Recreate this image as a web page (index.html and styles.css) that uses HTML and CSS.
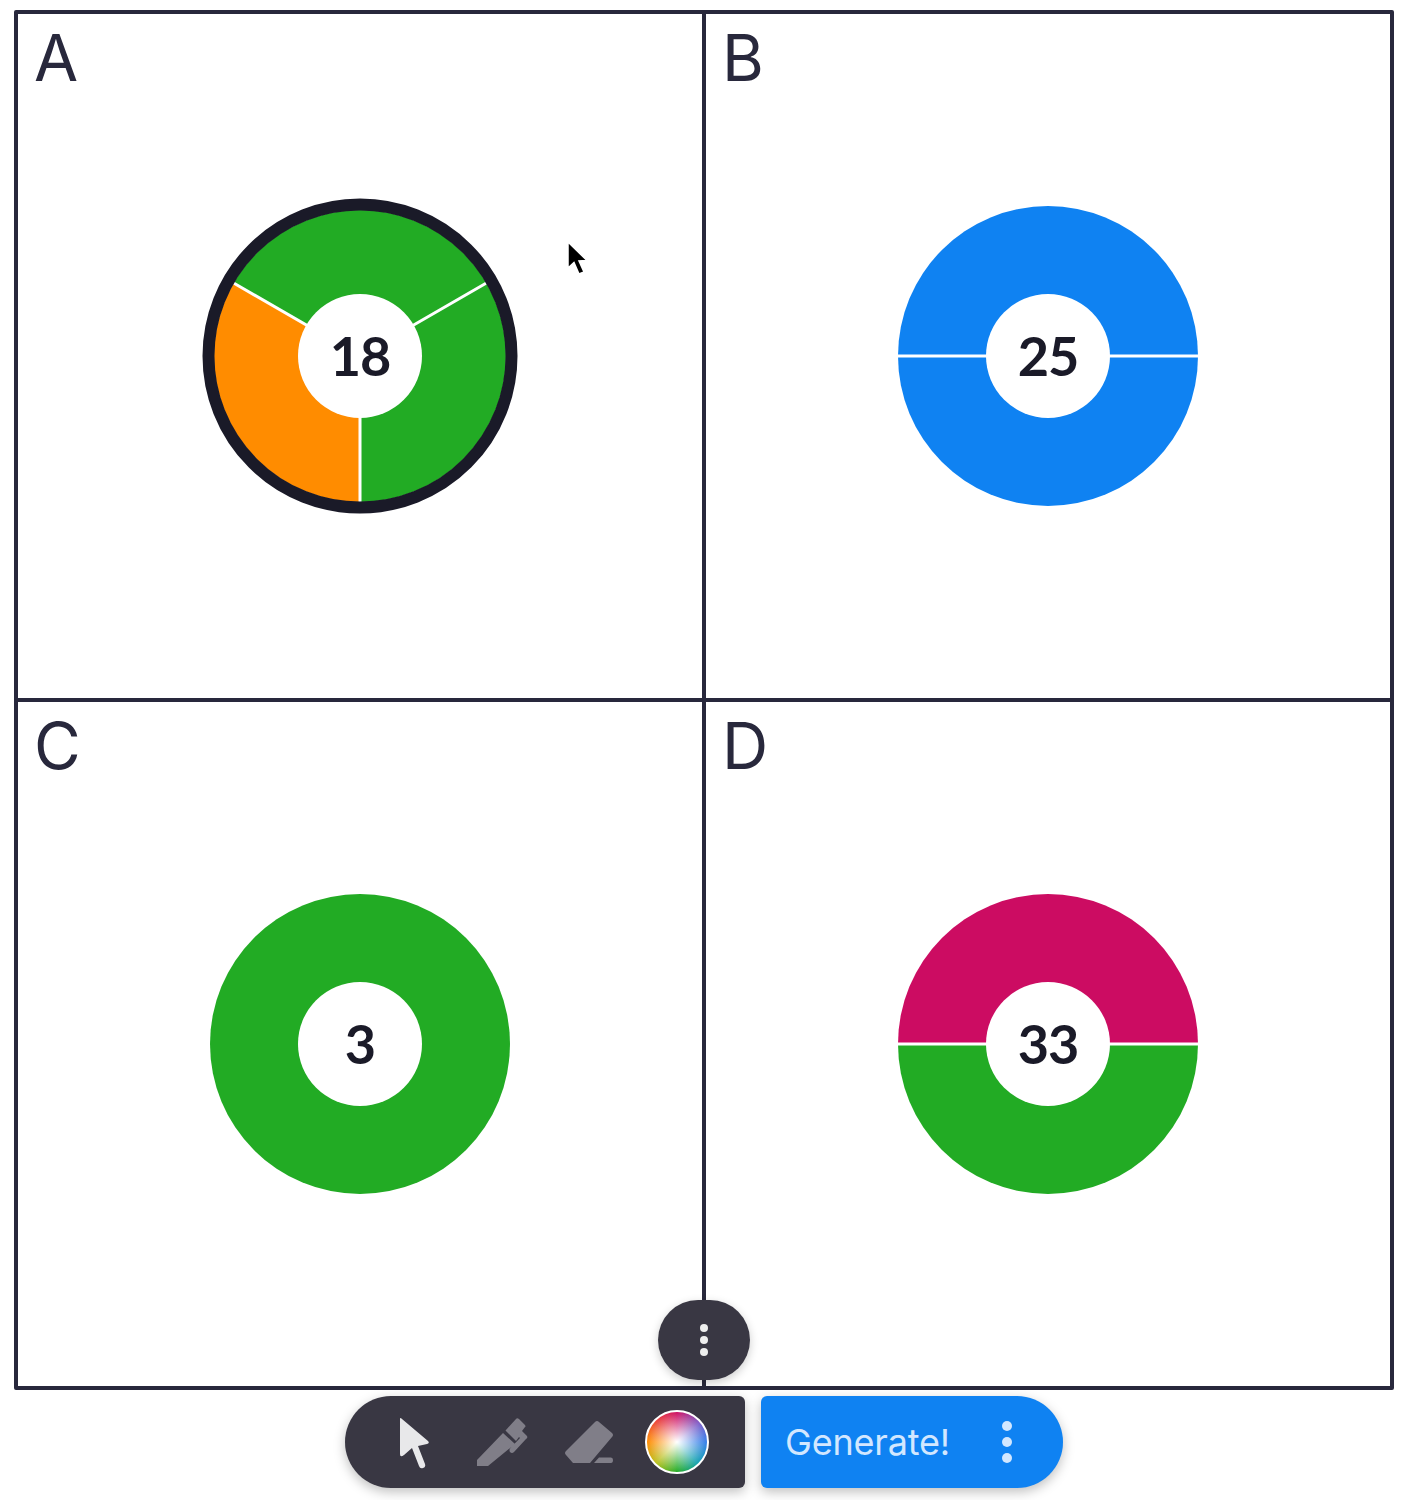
FILE: index.html
```html
<!DOCTYPE html>
<html lang="en">
<head>
    <meta charset="UTF-8">
    <meta name="viewport" content="width=device-width, initial-scale=1.0">
    <title>Wheels</title>
    <link rel="stylesheet" href="styles.css">
</head>
<body>
    <div class="board">
        <div class="cell">
            <span class="cell-label">A</span>
            <div class="wheel">
                <svg class="wheel-art" viewBox="-158 -158 316 316">
                    <path class="green" d="M-126.4 -73A146 146 0 0 1 126.4 -73L0 0Z"/>
                    <path class="green" d="M126.4 -73A146 146 0 0 1 0 146L0 0Z"/>
                    <path class="orange" d="M0 146A146 146 0 0 1 -126.4 -73L0 0Z"/>
                    <path class="divider" d="M0 0L126.4 -73M0 0L0 146M0 0L-126.4 -73"/>
                    <circle class="selected-ring" r="151.5"/>
                </svg>
                <span class="wheel-count">18</span>
            </div>
            <svg class="mouse-pointer" width="24" height="36" viewBox="0 0 24 36">
                <path d="M2 1L2 27L8 21.500L13 33L18 31L13 20L21 19.500Z"/>
            </svg>
        </div>
        <div class="cell">
            <span class="cell-label">B</span>
            <div class="wheel">
                <svg class="wheel-art" viewBox="-158 -158 316 316">
                    <path class="blue" d="M-150 0A150 150 0 0 1 150 0Z"/>
                    <path class="blue" d="M150 0A150 150 0 0 1 -150 0Z"/>
                    <path class="divider" d="M-150 0L150 0"/>
                </svg>
                <span class="wheel-count">25</span>
            </div>
        </div>
        <div class="cell">
            <span class="cell-label">C</span>
            <div class="wheel">
                <svg class="wheel-art" viewBox="-158 -158 316 316">
                    <circle class="green" r="150"/>
                </svg>
                <span class="wheel-count">3</span>
            </div>
        </div>
        <div class="cell">
            <span class="cell-label">D</span>
            <div class="wheel">
                <svg class="wheel-art" viewBox="-158 -158 316 316">
                    <path class="magenta" d="M-150 0A150 150 0 0 1 150 0Z"/>
                    <path class="green" d="M150 0A150 150 0 0 1 -150 0Z"/>
                    <path class="divider" d="M-150 0L150 0"/>
                </svg>
                <span class="wheel-count">33</span>
            </div>
        </div>
        <button class="board-menu">
            <span class="dots"><i></i><i></i><i></i></span>
        </button>
    </div>

    <div class="toolbar">
        <div class="tools">
            <button class="tool">
                <svg viewBox="0 0 64 64"><path class="tool-active" d="M19 9Q19 7 21 9L47 31Q49 33 46 34L37 36L44 54Q45 57 42 58Q39 59 38 56L31 38L23 45Q19 48 19 44Z"/></svg>
            </button>
            <button class="tool">
                <svg viewBox="0 0 64 64"><path class="tool-idle" d="M8 56L8 50L34 23L46 34L19 56ZM36.500 20.500L47 9Q48 7.500 50 9L56 15Q57 16.500 56 17L53 21L58 26Q59 28 57 29L45 42Q43 44 41 42Q40 40 41 38.500L51 28L50 27L47 31Z"/></svg>
            </button>
            <button class="tool">
                <svg viewBox="0 0 64 64"><path class="tool-idle" d="M38 12Q40 10 42 12L55 23Q57 25 55 27L33 53L16 53L9 45Q7 43 9 41ZM42 47.500L54 47.500Q56 47.500 56 50Q56 53 54 53L37 53Z"/></svg>
            </button>
            <button class="color-swatch"></button>
        </div>
        <button class="generate">
            <span>Generate!</span>
            <span class="dots dots-large"><i></i><i></i><i></i></span>
        </button>
    </div>
</body>
</html>
```

FILE: styles.css
```css
* {
    box-sizing: border-box;
}

body {
    min-height: 100vh;
    margin: 0;
    padding-top: 10px;
    background-color: white;
    font-family: Inter, "Liberation Sans", sans-serif;
}

button {
    border: none;
    padding: 0;
    font-family: inherit;
    cursor: pointer;
}

.board {
    position: relative;
    display: grid;
    grid-template-columns: 684px 684px;
    grid-auto-rows: 684px;
    gap: 4px;
    width: 1380px;
    margin: 0 auto;
    border: 4px solid #28283c;
    border-radius: 2px;
    background-color: #28283c;
}

.cell {
    position: relative;
    display: grid;
    place-items: center;
    background-color: white;
}

.cell > .cell-label,
.cell > .wheel {
    grid-area: 1 / 1;
}

.cell-label {
    justify-self: start;
    align-self: start;
    margin: 4px 0 0 16px;
    font-size: 64px;
    font-weight: 400;
    line-height: 80px;
    color: #28283c;
}

.wheel {
    display: grid;
    place-items: center;
    width: 316px;
    height: 316px;
}

.wheel > * {
    grid-area: 1 / 1;
}

.wheel-art {
    display: block;
    width: 316px;
    height: 316px;
}

.wheel-count {
    display: flex;
    justify-content: center;
    align-items: center;
    width: 124px;
    height: 124px;
    padding-bottom: 2px;
    border-radius: 50%;
    background-color: white;
    font-family: Lato, sans-serif;
    font-size: 54px;
    font-weight: 700;
    letter-spacing: -1px;
    color: #1a1a28;
}

.green { fill: #22ab24; }
.orange { fill: #ff8c00; }
.blue { fill: #0f82f2; }
.magenta { fill: #cc0c62; }

.divider {
    fill: none;
    stroke: white;
    stroke-width: 3;
}

.selected-ring {
    fill: none;
    stroke: #1a1a28;
    stroke-width: 12;
}

.mouse-pointer {
    position: absolute;
    left: 548px;
    top: 227px;
}

.mouse-pointer path {
    fill: black;
    stroke: white;
    stroke-width: 1.5;
}

.board-menu {
    position: absolute;
    left: 50%;
    bottom: 6px;
    transform: translateX(-50%);
    display: flex;
    justify-content: center;
    align-items: center;
    width: 92px;
    height: 80px;
    border-radius: 40px;
    background-color: #393743;
    box-shadow: 0 3px 10px rgba(0, 0, 0, 0.2);
}

.dots {
    display: flex;
    flex-direction: column;
    gap: 4px;
}

.dots i {
    display: block;
    width: 8px;
    height: 8px;
    border-radius: 50%;
    background-color: #eeeeee;
}

.dots-large {
    gap: 6px;
}

.dots-large i {
    width: 10px;
    height: 10px;
    background-color: #d2e7ff;
}

.toolbar {
    display: flex;
    justify-content: center;
    gap: 16px;
    margin-top: 6px;
}

.tools {
    display: flex;
    align-items: center;
    gap: 24px;
    width: 400px;
    height: 92px;
    padding: 0 36px;
    border-radius: 46px 6px 6px 46px;
    background-color: #393743;
    box-shadow: 0 4px 12px rgba(0, 0, 0, 0.25);
}

.tool {
    width: 64px;
    height: 64px;
    background: none;
}

.tool svg {
    display: block;
    width: 64px;
    height: 64px;
}

.tool-active { fill: #e8e8ea; }
.tool-idle { fill: #807e88; }

.color-swatch {
    width: 64px;
    height: 64px;
    border: 2px solid white;
    border-radius: 50%;
    background:
        radial-gradient(circle, white 0, rgba(255, 255, 255, 0.7) 22%, rgba(255, 255, 255, 0) 72%),
        conic-gradient(#cc0c62, #7a5bc8 50deg, #2f7be8 90deg, #0f9fb0 135deg, #22ab24 180deg, #b9c01c 225deg, #ff8c00 270deg, #e83a3a 320deg, #cc0c62);
}

.generate {
    display: flex;
    justify-content: space-between;
    align-items: center;
    width: 302px;
    height: 92px;
    padding: 0 51px 0 24px;
    border-radius: 6px 46px 46px 6px;
    background-color: #0f82f2;
    box-shadow: 0 4px 12px rgba(0, 0, 0, 0.25);
    font-size: 36px;
    font-weight: 400;
    letter-spacing: -0.2px;
    color: #d2e7ff;
}
```
